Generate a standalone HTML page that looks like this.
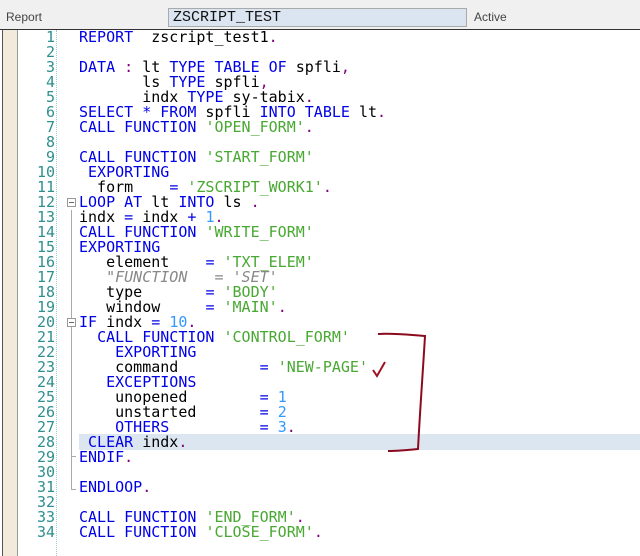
<!DOCTYPE html>
<html><head><style>
body{margin:0;width:640px;height:556px;overflow:hidden;background:#fff;position:relative;font-family:"Liberation Sans",sans-serif}
#top{position:absolute;left:0;top:0;width:640px;height:29px;background:#f0f0f0;border-bottom:1px solid #333}
#lbl{position:absolute;left:6px;top:10px;font-size:12px;color:#444}
#box{position:absolute;left:168px;top:8px;width:299px;height:19px;background:#dbe5f1;border:1px solid #aaa;box-sizing:border-box;font-family:"Liberation Mono",monospace;font-size:15px;color:#111;padding-left:4px;line-height:17px}
#act{position:absolute;left:474px;top:10px;font-size:12px;color:#444}
#lb{position:absolute;left:2px;top:30px;width:1px;height:526px;background:#555}
#gut{position:absolute;left:3px;top:30px;width:14px;height:526px;background:#f2ebdb;border-right:1px solid #999}
#dot{position:absolute;left:56px;top:30px;height:526px;border-left:1px dotted #9cc}
#hl{position:absolute;left:79px;top:434px;width:561px;height:16px;background:#dce6f1}
.code{position:absolute;top:30px;font-family:"DejaVu Sans Mono",monospace;font-size:15px;line-height:15px;white-space:pre;margin:0}
#nums{left:20px;width:35px;text-align:right;color:#2f8f8f}
#src{left:79px;color:#000}
.k{color:#0000e6}.s{color:#48a832}.n{color:#3399ff}.p{color:#800080}.c{color:#888;font-style:italic}
.fold{position:absolute;width:7px;height:7px;border:1px solid #999;background:#fff;left:67px}
.fold:after{content:"";position:absolute;left:1px;top:3px;width:5px;height:1px;background:#666}
.vl{position:absolute;left:71px;border-left:1px solid #aaa}
</style></head><body>
<div id="top"><div id="lbl">Report</div><div id="box">ZSCRIPT_TEST</div><div id="act">Active</div></div>
<div id="lb"></div><div id="gut"></div><div id="dot"></div><div id="hl"></div>
<div class="vl" style="top:210px;height:280px"></div>
<div class="vl" style="top:330px;height:127px"></div>
<div style="position:absolute;left:71px;top:489px;width:5px;border-top:1px solid #aaa"></div>
<div style="position:absolute;left:71px;top:456px;width:5px;border-top:1px solid #aaa"></div>
<div class="fold" style="top:198px"></div>
<div class="fold" style="top:318px"></div>
<pre class="code" id="nums">1
2
3
4
5
6
7
8
9
10
11
12
13
14
15
16
17
18
19
20
21
22
23
24
25
26
27
28
29
30
31
32
33
34</pre>
<pre class="code" id="src"><span class="k">REPORT</span>  zscript_test1<span class="p">.</span>

<span class="k">DATA</span> <span class="p">:</span> lt <span class="k">TYPE TABLE OF</span> spfli<span class="p">,</span>
       ls <span class="k">TYPE</span> spfli<span class="p">,</span>
       indx <span class="k">TYPE</span> sy-tabix<span class="p">.</span>
<span class="k">SELECT * FROM</span> spfli <span class="k">INTO TABLE</span> lt<span class="p">.</span>
<span class="k">CALL FUNCTION</span> <span class="s">'OPEN_FORM'</span><span class="p">.</span>

<span class="k">CALL FUNCTION</span> <span class="s">'START_FORM'</span>
 <span class="k">EXPORTING</span>
  form    <span class="k">=</span> <span class="s">'ZSCRIPT_WORK1'</span><span class="p">.</span>
<span class="k">LOOP AT</span> lt <span class="k">INTO</span> ls <span class="p">.</span>
indx <span class="k">=</span> indx <span class="k">+</span> <span class="n">1</span><span class="p">.</span>
<span class="k">CALL FUNCTION</span> <span class="s">'WRITE_FORM'</span>
<span class="k">EXPORTING</span>
   element    <span class="k">=</span> <span class="s">'TXT_ELEM'</span>
   <span class="c">"FUNCTION   = 'SET'</span>
   type       <span class="k">=</span> <span class="s">'BODY'</span>
   window     <span class="k">=</span> <span class="s">'MAIN'</span><span class="p">.</span>
<span class="k">IF</span> indx <span class="k">=</span> <span class="n">10</span><span class="p">.</span>
  <span class="k">CALL FUNCTION</span> <span class="s">'CONTROL_FORM'</span>
    <span class="k">EXPORTING</span>
    command         <span class="k">=</span> <span class="s">'NEW-PAGE'</span>
   <span class="k">EXCEPTIONS</span>
    unopened        <span class="k">=</span> <span class="n">1</span>
    unstarted       <span class="k">=</span> <span class="n">2</span>
    <span class="k">OTHERS</span>          <span class="k">=</span> <span class="n">3</span><span class="p">.</span>
 <span class="k">CLEAR</span> indx<span class="p">.</span>
<span class="k">ENDIF</span><span class="p">.</span>

<span class="k">ENDLOOP</span><span class="p">.</span>

<span class="k">CALL FUNCTION</span> <span class="s">'END_FORM'</span><span class="p">.</span>
<span class="k">CALL FUNCTION</span> <span class="s">'CLOSE_FORM'</span><span class="p">.</span></pre>
<svg style="position:absolute;left:0;top:0" width="640" height="556">
<path d="M378 334 C395 333 410 335 425 336 C423 370 420 410 418 449 C408 450 398 451 388 451" fill="none" stroke="#8b0a1e" stroke-width="2"/>
<path d="M373 370 L377 376 L385 362" fill="none" stroke="#a01020" stroke-width="2"/>
</svg>
</body></html>
